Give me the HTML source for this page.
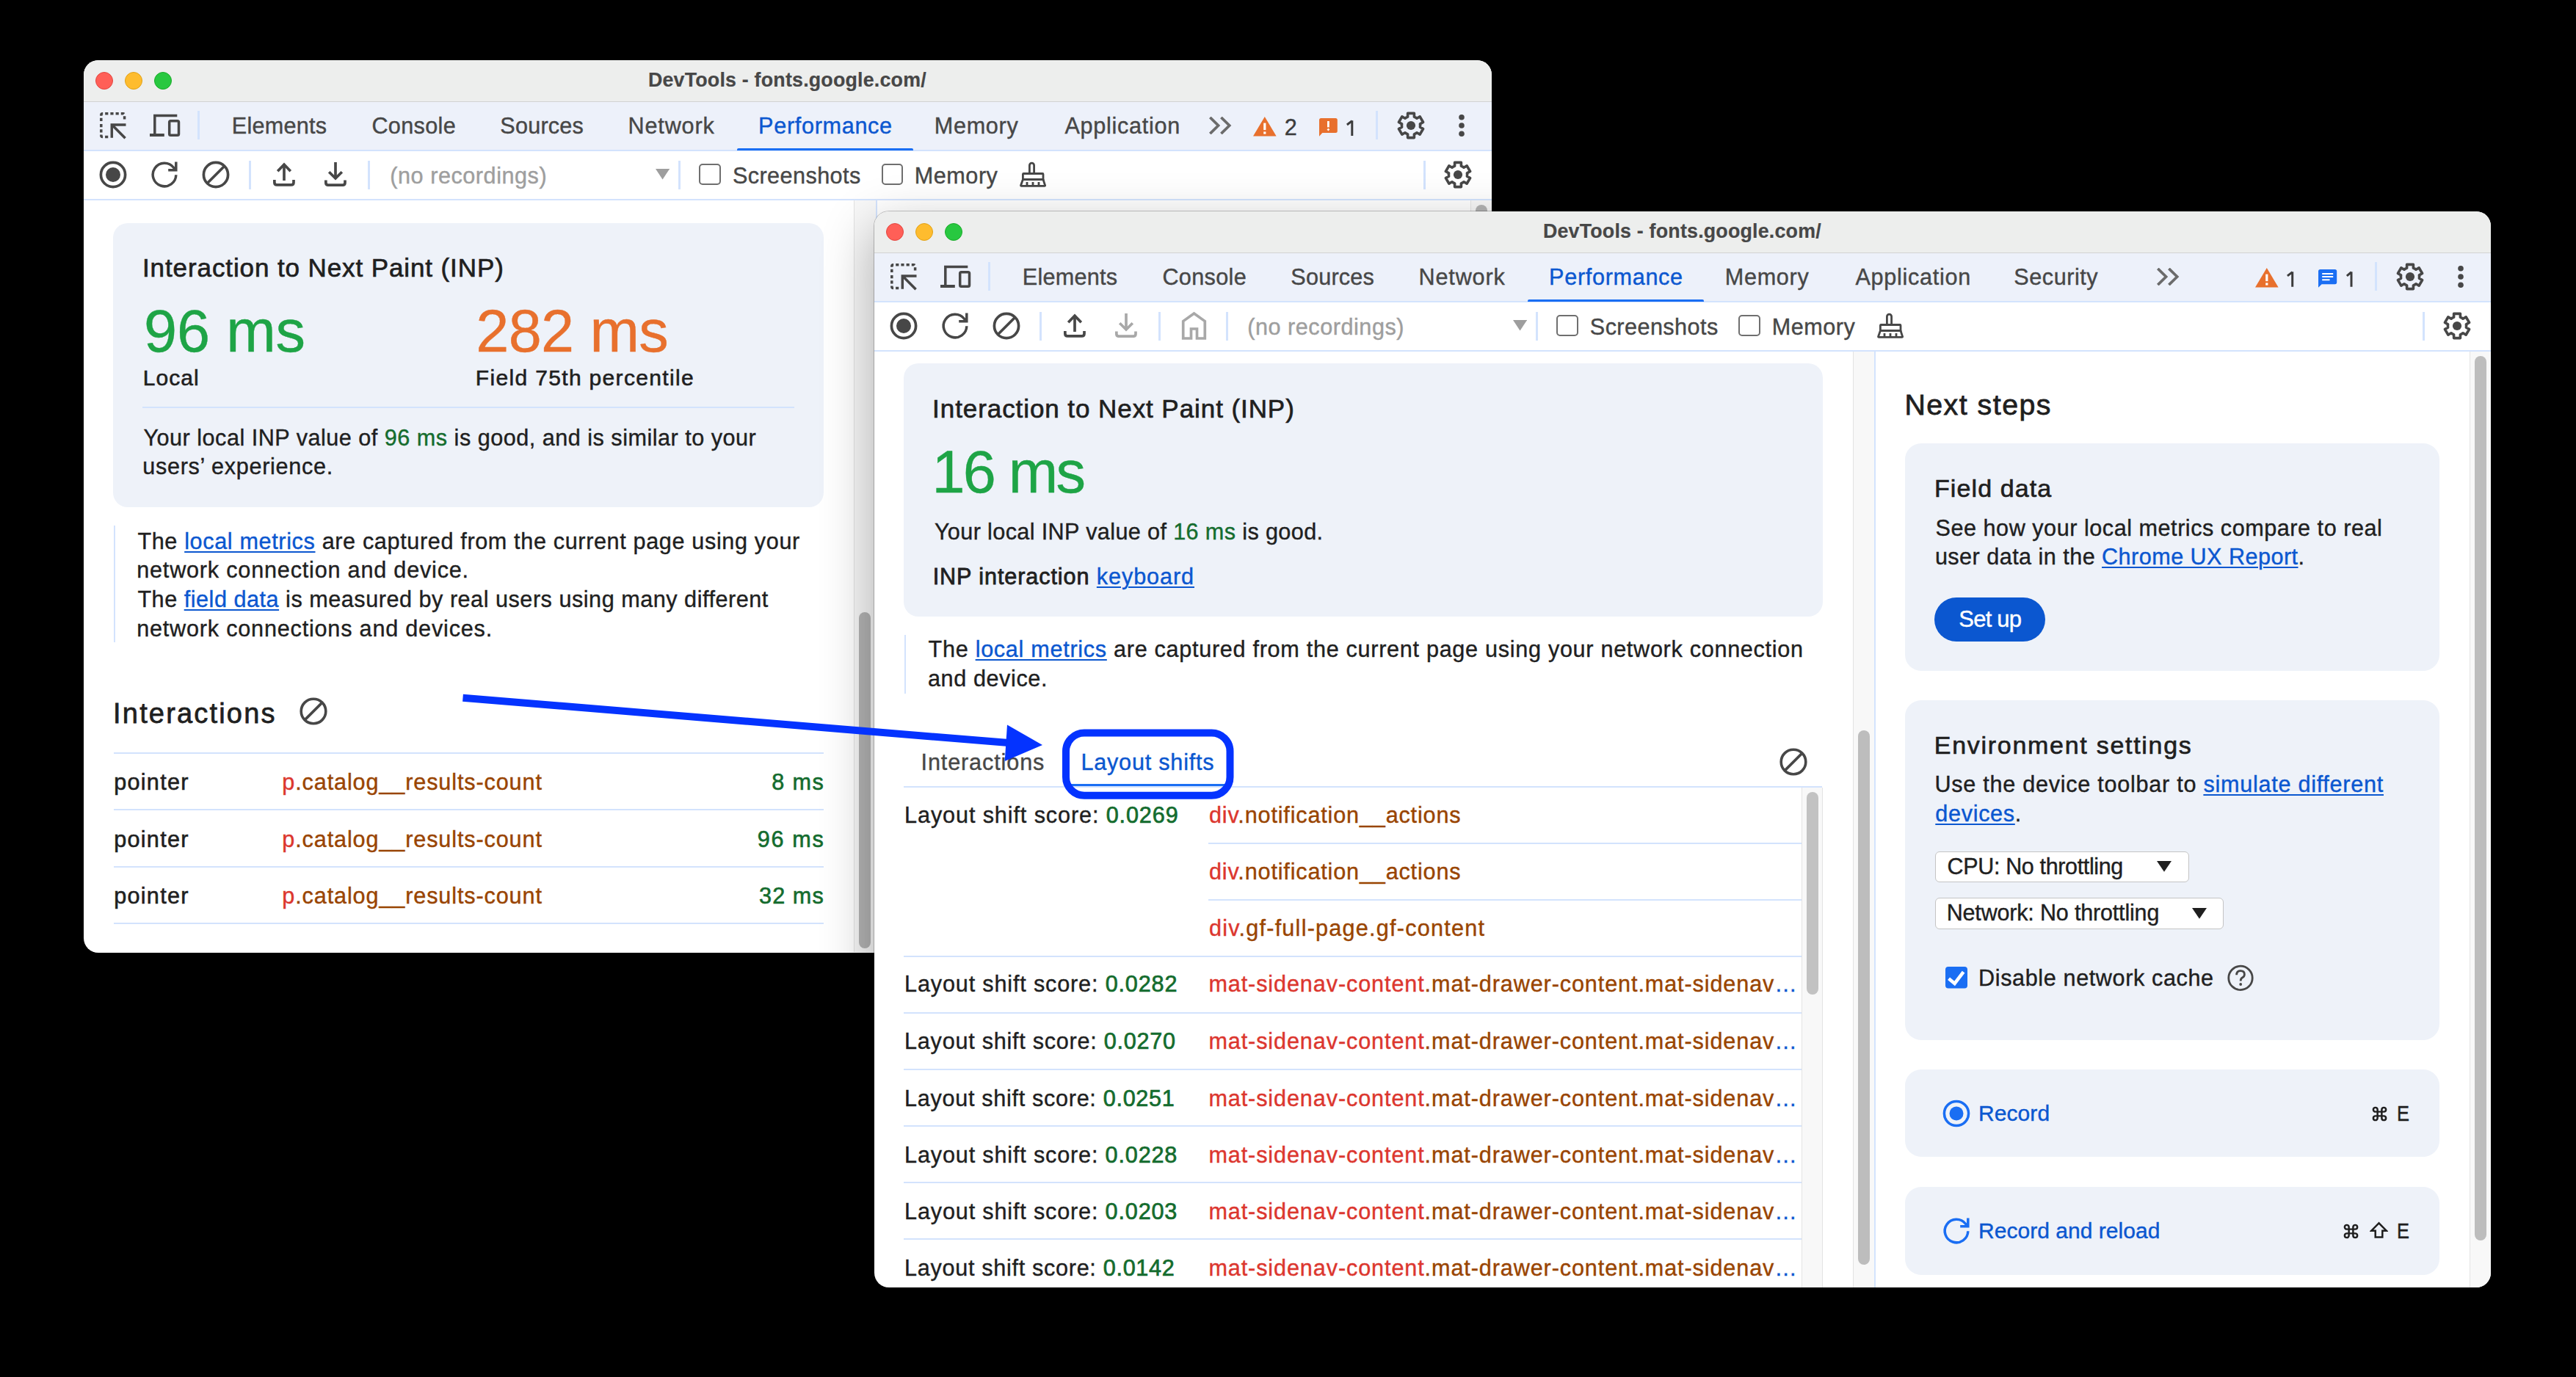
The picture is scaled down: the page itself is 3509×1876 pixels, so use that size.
<!DOCTYPE html><html><head><meta charset="utf-8"><style>html,body{margin:0;padding:0}body{width:3509px;height:1876px;background:#000;position:relative;overflow:hidden;font-family:"Liberation Sans",sans-serif}.a{position:absolute}.t{position:absolute;white-space:pre;-webkit-text-stroke:0.4px currentColor}.win{position:absolute;overflow:hidden;background:#fff}</style></head><body><div class="win" style="left:114px;top:82px;width:1918px;height:1216px;border-radius:20px"><div class="a" style="left:-114px;top:-82px"><div class="a" style="left:114px;top:82px;width:1918px;height:56px;background:#edeeed;"></div><div class="a" style="left:114px;top:138px;width:1918px;height:1px;background:#d2d2d2;"></div><div class="a" style="left:130px;top:98px;width:24px;height:24px;border-radius:50%;background:#ff5f57;box-sizing:border-box;border:1px solid #e2463f"></div><div class="a" style="left:170px;top:98px;width:24px;height:24px;border-radius:50%;background:#febc2e;box-sizing:border-box;border:1px solid #e1a116"></div><div class="a" style="left:210px;top:98px;width:24px;height:24px;border-radius:50%;background:#28c840;box-sizing:border-box;border:1px solid #1aab29"></div><div class="t" style="left:882.9px;top:96px;font-size:26.8px;line-height:26.8px;color:#474747;letter-spacing:0.207px;font-weight:700;-webkit-text-stroke:0.2px currentColor;">DevTools - fonts.google.com/</div><div class="a" style="left:114px;top:139px;width:1918px;height:65px;background:#edf1fa;"></div><div class="a" style="left:114px;top:204px;width:1918px;height:2px;background:#d3e3fd;"></div><svg class="a" style="left:135.5px;top:152.5px;" width="37" height="37" viewBox="0 0 37 37"><path d="M1.8 12 V3.8 Q1.8 1.8 3.8 1.8 H31.6 Q33.6 1.8 33.6 3.8 V11" fill="none" stroke="#474747" stroke-width="3.5" stroke-dasharray="4.2 3"/><path d="M1.8 16 V31.5 Q1.8 33.5 3.8 33.5 H12" fill="none" stroke="#474747" stroke-width="3.5" stroke-dasharray="4.2 3"/><path d="M16.3 34.8 V17 H35.5 M17 17.6 L34.6 35.2" fill="none" stroke="#474747" stroke-width="3.5"/></svg><svg class="a" style="left:204px;top:153.5px;" width="42" height="34" viewBox="0 0 42 34"><path d="M6.8 30 V3.6 H37.3" fill="none" stroke="#474747" stroke-width="3.5"/><rect x="0" y="28" width="19.8" height="4" fill="#474747"/><rect x="26.7" y="10.7" width="12.8" height="19.6" rx="1.8" fill="none" stroke="#474747" stroke-width="3.5"/></svg><div class="a" style="left:268.5px;top:151px;width:3.0px;height:39px;background:#d3e3fd;"></div><div class="t" style="left:315.8px;top:156px;font-size:30.6px;line-height:30.6px;color:#474747;letter-spacing:0.230px;">Elements</div><div class="t" style="left:506.4px;top:156px;font-size:30.6px;line-height:30.6px;color:#474747;letter-spacing:0.344px;">Console</div><div class="t" style="left:681.3px;top:156px;font-size:30.6px;line-height:30.6px;color:#474747;letter-spacing:0.231px;">Sources</div><div class="t" style="left:855.6px;top:156px;font-size:30.6px;line-height:30.6px;color:#474747;letter-spacing:0.820px;">Network</div><div class="t" style="left:1033.1px;top:156px;font-size:30.6px;line-height:30.6px;color:#0b57d0;letter-spacing:0.688px;">Performance</div><div class="t" style="left:1272.8px;top:156px;font-size:30.6px;line-height:30.6px;color:#474747;letter-spacing:0.688px;">Memory</div><div class="t" style="left:1450.5px;top:156px;font-size:30.6px;line-height:30.6px;color:#474747;letter-spacing:0.712px;">Application</div><div class="a" style="left:1004px;top:201.5px;width:240px;height:3.5px;background:#1a6ef3;border-radius:2px 2px 0 0"></div><svg class="a" style="left:1646.5px;top:159px;" width="31" height="24" viewBox="0 0 31 24"><path d="M1.3 0.9 L12.6 12 L1.3 23.1 M16.4 0.9 L27.7 12 L16.4 23.1" stroke="#6b6b6b" stroke-width="3.7" fill="none"/></svg><svg class="a" style="left:1706.6px;top:158.6px;" width="32" height="27" viewBox="0 0 32 27"><path d="M15.8 0 L31.6 26.5 H0 Z" fill="#e8702d"/><rect x="14.2" y="8.6" width="3.2" height="9.5" fill="#fff"/><rect x="14.2" y="20.4" width="3.2" height="3.2" fill="#fff"/></svg><div class="t" style="left:1749.7px;top:158px;font-size:30.6px;line-height:30.6px;color:#3c3c3c;">2</div><svg class="a" style="left:1797px;top:161px;" width="25" height="25" viewBox="0 0 25 25"><path d="M0 2.5 Q0 0 2.5 0 H22.3 Q24.8 0 24.8 2.5 V17.4 Q24.8 19.9 22.3 19.9 H4.3 L0 24.8 Z" fill="#e8702d"/><rect x="11" y="4" width="2.8" height="8.4" fill="#fff"/><rect x="11.1" y="14.3" width="2.6" height="2.6" fill="#fff" transform="rotate(45 12.4 15.6)"/></svg><svg class="a" style="left:1834.3px;top:163.1px;" width="10.400000000000091" height="21.900000000000006" viewBox="0 0 10.400000000000091 21.900000000000006"><path d="M7.80 21.900000000000006 V1.2 M7.80 1.6 L0.9 7.01" stroke="#3c3c3c" stroke-width="3" fill="none" stroke-linejoin="round"/></svg><div class="a" style="left:1873.5px;top:151px;width:3.0px;height:39px;background:#d3e3fd;"></div><svg class="a" style="left:1900px;top:149px;" width="44" height="44" viewBox="0 0 44 44"><path d="M15.70 11.09 L17.60 10.20 L17.60 5.40 L26.40 5.40 L26.40 10.20 L28.30 11.09 L30.02 12.29 L34.18 9.89 L38.58 17.51 L34.42 19.91 L34.60 22.00 L34.42 24.09 L38.58 26.49 L34.18 34.11 L30.02 31.71 L28.30 32.91 L26.40 33.80 L26.40 38.60 L17.60 38.60 L17.60 33.80 L15.70 32.91 L13.98 31.71 L9.82 34.11 L5.42 26.49 L9.58 24.09 L9.40 22.00 L9.58 19.91 L5.42 17.51 L9.82 9.89 L13.98 12.29 Z" fill="none" stroke="#474747" stroke-width="3.6" stroke-linejoin="round"/><circle cx="22" cy="22" r="6.1" fill="#474747"/></svg><svg class="a" style="left:1985px;top:154px;" width="12" height="34" viewBox="0 0 12 34"><circle cx="6" cy="5.7" r="3.8" fill="#474747"/><circle cx="6" cy="17" r="3.8" fill="#474747"/><circle cx="6" cy="28.3" r="3.8" fill="#474747"/></svg><div class="a" style="left:114px;top:206px;width:1918px;height:65px;background:#ffffff;"></div><div class="a" style="left:114px;top:271px;width:1918px;height:2px;background:#d3e3fd;"></div><svg class="a" style="left:134px;top:218px;" width="40" height="40" viewBox="0 0 40 40"><circle cx="20" cy="20" r="16.6" fill="none" stroke="#474747" stroke-width="3.7"/><circle cx="20" cy="20" r="10" fill="#474747"/></svg><svg class="a" style="left:204px;top:218px;" width="40" height="40" viewBox="0 0 40 40"><path d="M35.80 20.28 A15.8 15.8 0 1 1 32.45 10.27 L35.6 14.2" fill="none" stroke="#474747" stroke-width="3.5"/><path d="M25.2 13.7 H35.8 V2.6" fill="none" stroke="#474747" stroke-width="3.5"/></svg><svg class="a" style="left:274px;top:218px;" width="40" height="40" viewBox="0 0 40 40"><circle cx="20" cy="20" r="16.6" fill="none" stroke="#474747" stroke-width="3.7"/><path d="M31.74 8.26 L8.26 31.74" stroke="#474747" stroke-width="3.7"/></svg><div class="a" style="left:338.7px;top:219px;width:3.0px;height:38.5px;background:#d3e3fd;"></div><svg class="a" style="left:371.8px;top:220.5px;" width="30" height="33" viewBox="0 0 30 33"><path d="M15 4 V25" stroke="#474747" stroke-width="3.7" fill="none"/><path d="M6.2 12.2 L15 3.2 L23.8 12.2" stroke="#474747" stroke-width="3.7" fill="none"/><path d="M1.85 24 V27.5 Q1.85 30.9 5.2 30.9 H24.6 Q28 30.9 28 27.5 V24" stroke="#474747" stroke-width="3.7" fill="none"/></svg><svg class="a" style="left:442px;top:220.5px;" width="30" height="33" viewBox="0 0 30 33"><path d="M15 0 V21" stroke="#474747" stroke-width="3.7" fill="none"/><path d="M6.2 13.2 L15 22 L23.8 13.2" stroke="#474747" stroke-width="3.7" fill="none"/><path d="M1.85 24.5 V27.9 Q1.85 31.2 5.2 31.2 H24.6 Q28 31.2 28 27.9 V24.5" stroke="#474747" stroke-width="3.7" fill="none"/></svg><div class="a" style="left:501.1px;top:219px;width:3.0px;height:38.5px;background:#d3e3fd;"></div><div class="t" style="left:531.3px;top:224px;font-size:30.6px;line-height:30.6px;color:#9e9e9e;letter-spacing:0.541px;">(no recordings)</div><svg class="a" style="left:892.7px;top:230.2px;" width="19.09999999999991" height="14.5" viewBox="0 0 19.09999999999991 14.5"><path d="M0 0 H19.09999999999991 L9.549999999999955 14.5 Z" fill="#9e9e9e"/></svg><div class="a" style="left:923.8px;top:219px;width:3.0px;height:38.5px;background:#d3e3fd;"></div><div class="a" style="left:952.3px;top:223.3px;width:29.40000000000009px;height:29.19999999999999px;box-sizing:border-box;border:2.6px solid #6f6f6f;border-radius:5px"></div><div class="t" style="left:997.9px;top:224px;font-size:30.6px;line-height:30.6px;color:#474747;letter-spacing:0.435px;">Screenshots</div><div class="a" style="left:1200.5px;top:223.3px;width:29.299999999999955px;height:29.19999999999999px;box-sizing:border-box;border:2.6px solid #6f6f6f;border-radius:5px"></div><div class="t" style="left:1245.8px;top:224px;font-size:30.6px;line-height:30.6px;color:#474747;letter-spacing:0.528px;">Memory</div><svg class="a" style="left:1389.3px;top:219.4px;" width="37" height="37" viewBox="0 0 37 37"><path d="M13.4 17 V6.2 A3.1 3.1 0 0 1 19.6 6.2 V17" stroke="#474747" stroke-width="2.8" fill="none"/><path d="M4.4 17.5 H31.2 Q32 17.5 32 18.5 V25.5 H4.4 V18.5 Q4.4 17.5 5.4 17.5 Z" stroke="#474747" stroke-width="2.8" fill="none"/><path d="M4.4 25.5 L1.6 33.5 Q1.4 34.4 2.4 34.4 H33.8 Q34.8 34.4 34.6 33.5 L32 25.5" stroke="#474747" stroke-width="2.8" fill="none"/><path d="M10 34 V29 M18 34 V29 M26 34 V29" stroke="#474747" stroke-width="2.8"/></svg><div class="a" style="left:1939.1px;top:219px;width:3.0px;height:38.5px;background:#d3e3fd;"></div><svg class="a" style="left:1964px;top:215.5px;" width="44" height="44" viewBox="0 0 44 44"><path d="M15.70 11.09 L17.60 10.20 L17.60 5.40 L26.40 5.40 L26.40 10.20 L28.30 11.09 L30.02 12.29 L34.18 9.89 L38.58 17.51 L34.42 19.91 L34.60 22.00 L34.42 24.09 L38.58 26.49 L34.18 34.11 L30.02 31.71 L28.30 32.91 L26.40 33.80 L26.40 38.60 L17.60 38.60 L17.60 33.80 L15.70 32.91 L13.98 31.71 L9.82 34.11 L5.42 26.49 L9.58 24.09 L9.40 22.00 L9.58 19.91 L5.42 17.51 L9.82 9.89 L13.98 12.29 Z" fill="none" stroke="#474747" stroke-width="3.6" stroke-linejoin="round"/><circle cx="22" cy="22" r="6.1" fill="#474747"/></svg><div class="a" style="left:154px;top:304px;width:968px;height:387px;background:#eef2f9;border-radius:20px"></div><div class="t" style="left:194.0px;top:347px;font-size:35px;line-height:35px;color:#1f1f1f;letter-spacing:0.896px;-webkit-text-stroke:0.70px currentColor;">Interaction to Next Paint (INP)</div><div class="t" style="left:196.1px;top:411px;font-size:81px;line-height:81px;color:#1ea446;letter-spacing:-0.176px;">96 ms</div><div class="t" style="left:648.2px;top:411px;font-size:81px;line-height:81px;color:#e8702d;letter-spacing:-0.589px;">282 ms</div><div class="t" style="left:194.8px;top:500px;font-size:30px;line-height:30px;color:#1f1f1f;letter-spacing:1.037px;-webkit-text-stroke:0.60px currentColor;">Local</div><div class="t" style="left:647.8px;top:500px;font-size:30px;line-height:30px;color:#1f1f1f;letter-spacing:1.336px;-webkit-text-stroke:0.60px currentColor;">Field 75th percentile</div><div class="a" style="left:194px;top:554px;width:888px;height:2px;background:#d3e3fd;"></div><div class="t" style="left:195.5px;top:581px;font-size:30.6px;line-height:30.6px;color:#1f1f1f;letter-spacing:0.498px;">Your local INP value of <span style="color:#146c2e">96 ms</span> is good, and is similar to your</div><div class="t" style="left:194.3px;top:620px;font-size:30.6px;line-height:30.6px;color:#1f1f1f;letter-spacing:0.688px;">users’ experience.</div><div class="a" style="left:154.5px;top:716px;width:2.0px;height:159px;background:#d3e3fd;"></div><div class="t" style="left:187.4px;top:722px;font-size:30.6px;line-height:30.6px;color:#1f1f1f;letter-spacing:0.640px;">The <span style="color:#0b57d0;text-decoration:underline;text-decoration-thickness:2.4px;text-underline-offset:2.5px">local metrics</span> are captured from the current page using your</div><div class="t" style="left:186.2px;top:761px;font-size:30.6px;line-height:30.6px;color:#1f1f1f;letter-spacing:0.805px;">network connection and device.</div><div class="t" style="left:187.4px;top:801px;font-size:30.6px;line-height:30.6px;color:#1f1f1f;letter-spacing:0.521px;">The <span style="color:#0b57d0;text-decoration:underline;text-decoration-thickness:2.4px;text-underline-offset:2.5px">field data</span> is measured by real users using many different</div><div class="t" style="left:186.2px;top:841px;font-size:30.6px;line-height:30.6px;color:#1f1f1f;letter-spacing:0.799px;">network connections and devices.</div><div class="t" style="left:154.1px;top:953px;font-size:38px;line-height:38px;color:#1f1f1f;letter-spacing:2.175px;-webkit-text-stroke:0.76px currentColor;">Interactions</div><svg class="a" style="left:406.5px;top:949px;" width="40" height="40" viewBox="0 0 40 40"><circle cx="20" cy="20" r="16.8" fill="none" stroke="#474747" stroke-width="3.6"/><path d="M31.88 8.12 L8.12 31.88" stroke="#474747" stroke-width="3.6"/></svg><div class="a" style="left:155px;top:1025.3px;width:966.7px;height:2.0px;background:#d3e3fd;"></div><div class="a" style="left:155px;top:1102.3px;width:966.7px;height:2.0px;background:#d3e3fd;"></div><div class="a" style="left:155px;top:1179.8px;width:966.7px;height:2.0px;background:#d3e3fd;"></div><div class="a" style="left:155px;top:1257.2px;width:966.7px;height:2.0px;background:#d3e3fd;"></div><div class="t" style="left:155.2px;top:1050px;font-size:30.6px;line-height:30.6px;color:#1f1f1f;letter-spacing:1.278px;-webkit-text-stroke:0.61px currentColor;">pointer</div><div class="t" style="left:384.3px;top:1050px;font-size:30.6px;line-height:30.6px;color:#1f1f1f;letter-spacing:0.881px;"><span style="color:#dc362e">p</span><span style="color:#994400">.catalog__results-count</span></div><div class="t" style="left:1051.2px;top:1050px;font-size:30.6px;line-height:30.6px;color:#146c2e;letter-spacing:1.411px;-webkit-text-stroke:0.61px currentColor;">8 ms</div><div class="t" style="left:155.2px;top:1128px;font-size:30.6px;line-height:30.6px;color:#1f1f1f;letter-spacing:1.278px;-webkit-text-stroke:0.61px currentColor;">pointer</div><div class="t" style="left:384.3px;top:1128px;font-size:30.6px;line-height:30.6px;color:#1f1f1f;letter-spacing:0.881px;"><span style="color:#dc362e">p</span><span style="color:#994400">.catalog__results-count</span></div><div class="t" style="left:1031.8px;top:1128px;font-size:30.6px;line-height:30.6px;color:#146c2e;letter-spacing:1.653px;-webkit-text-stroke:0.61px currentColor;">96 ms</div><div class="t" style="left:155.2px;top:1205px;font-size:30.6px;line-height:30.6px;color:#1f1f1f;letter-spacing:1.278px;-webkit-text-stroke:0.61px currentColor;">pointer</div><div class="t" style="left:384.3px;top:1205px;font-size:30.6px;line-height:30.6px;color:#1f1f1f;letter-spacing:0.881px;"><span style="color:#dc362e">p</span><span style="color:#994400">.catalog__results-count</span></div><div class="t" style="left:1034.1px;top:1205px;font-size:30.6px;line-height:30.6px;color:#146c2e;letter-spacing:1.077px;-webkit-text-stroke:0.61px currentColor;">32 ms</div><div class="a" style="left:1162.5px;top:273px;width:30.5px;height:1024px;background:#f8f8f8;"></div><div class="a" style="left:1162.5px;top:273px;width:1.0px;height:1024px;background:#e3e3e3;"></div><div class="a" style="left:1170px;top:834px;width:16px;height:458px;background:#b4b4b4;border-radius:8px"></div><div class="a" style="left:1192.5px;top:273px;width:2.0px;height:1024px;background:#d3e3fd;"></div><div class="a" style="left:2002.5px;top:273px;width:29.5px;height:27px;background:#f8f8f8;"></div><div class="a" style="left:2002.5px;top:273px;width:1.0px;height:27px;background:#e3e3e3;"></div><div class="a" style="left:2010px;top:279px;width:16px;height:41px;background:#b4b4b4;border-radius:8px"></div></div></div><div class="win" style="left:1191px;top:288px;width:2202px;height:1465.5px;border-radius:20px;box-shadow:0 0 0 1px rgba(0,0,0,0.22),-2px 22px 70px rgba(0,0,0,0.30)"><div class="a" style="left:-1191px;top:-288px"><div class="a" style="left:1191px;top:288px;width:2202px;height:56px;background:#edeeed;"></div><div class="a" style="left:1191px;top:344px;width:2202px;height:1px;background:#d2d2d2;"></div><div class="a" style="left:1207px;top:304px;width:24px;height:24px;border-radius:50%;background:#ff5f57;box-sizing:border-box;border:1px solid #e2463f"></div><div class="a" style="left:1247px;top:304px;width:24px;height:24px;border-radius:50%;background:#febc2e;box-sizing:border-box;border:1px solid #e1a116"></div><div class="a" style="left:1287px;top:304px;width:24px;height:24px;border-radius:50%;background:#28c840;box-sizing:border-box;border:1px solid #1aab29"></div><div class="t" style="left:2101.9px;top:302px;font-size:26.8px;line-height:26.8px;color:#474747;letter-spacing:0.207px;font-weight:700;-webkit-text-stroke:0.2px currentColor;">DevTools - fonts.google.com/</div><div class="a" style="left:1191px;top:345px;width:2202px;height:65px;background:#edf1fa;"></div><div class="a" style="left:1191px;top:410px;width:2202px;height:2px;background:#d3e3fd;"></div><svg class="a" style="left:1212.5px;top:358.5px;" width="37" height="37" viewBox="0 0 37 37"><path d="M1.8 12 V3.8 Q1.8 1.8 3.8 1.8 H31.6 Q33.6 1.8 33.6 3.8 V11" fill="none" stroke="#474747" stroke-width="3.5" stroke-dasharray="4.2 3"/><path d="M1.8 16 V31.5 Q1.8 33.5 3.8 33.5 H12" fill="none" stroke="#474747" stroke-width="3.5" stroke-dasharray="4.2 3"/><path d="M16.3 34.8 V17 H35.5 M17 17.6 L34.6 35.2" fill="none" stroke="#474747" stroke-width="3.5"/></svg><svg class="a" style="left:1281px;top:359.5px;" width="42" height="34" viewBox="0 0 42 34"><path d="M6.8 30 V3.6 H37.3" fill="none" stroke="#474747" stroke-width="3.5"/><rect x="0" y="28" width="19.8" height="4" fill="#474747"/><rect x="26.7" y="10.7" width="12.8" height="19.6" rx="1.8" fill="none" stroke="#474747" stroke-width="3.5"/></svg><div class="a" style="left:1345.5px;top:357px;width:3.0px;height:39px;background:#d3e3fd;"></div><div class="t" style="left:1392.8px;top:362px;font-size:30.6px;line-height:30.6px;color:#474747;letter-spacing:0.230px;">Elements</div><div class="t" style="left:1583.4px;top:362px;font-size:30.6px;line-height:30.6px;color:#474747;letter-spacing:0.344px;">Console</div><div class="t" style="left:1758.3px;top:362px;font-size:30.6px;line-height:30.6px;color:#474747;letter-spacing:0.231px;">Sources</div><div class="t" style="left:1932.6px;top:362px;font-size:30.6px;line-height:30.6px;color:#474747;letter-spacing:0.820px;">Network</div><div class="t" style="left:2110.1px;top:362px;font-size:30.6px;line-height:30.6px;color:#0b57d0;letter-spacing:0.688px;">Performance</div><div class="t" style="left:2349.8px;top:362px;font-size:30.6px;line-height:30.6px;color:#474747;letter-spacing:0.688px;">Memory</div><div class="t" style="left:2527.5px;top:362px;font-size:30.6px;line-height:30.6px;color:#474747;letter-spacing:0.712px;">Application</div><div class="t" style="left:2743.3px;top:362px;font-size:30.6px;line-height:30.6px;color:#474747;letter-spacing:0.541px;">Security</div><div class="a" style="left:2081px;top:407.5px;width:240px;height:3.5px;background:#1a6ef3;border-radius:2px 2px 0 0"></div><svg class="a" style="left:2938px;top:365px;" width="31" height="24" viewBox="0 0 31 24"><path d="M1.3 0.9 L12.6 12 L1.3 23.1 M16.4 0.9 L27.7 12 L16.4 23.1" stroke="#6b6b6b" stroke-width="3.7" fill="none"/></svg><svg class="a" style="left:3072.3px;top:364.8px;" width="32" height="27" viewBox="0 0 32 27"><path d="M15.8 0 L31.6 26.5 H0 Z" fill="#e8702d"/><rect x="14.2" y="8.6" width="3.2" height="9.5" fill="#fff"/><rect x="14.2" y="20.4" width="3.2" height="3.2" fill="#fff"/></svg><svg class="a" style="left:3114.5px;top:369.1px;" width="10.300000000000182" height="21.69999999999999" viewBox="0 0 10.300000000000182 21.69999999999999"><path d="M7.70 21.69999999999999 V1.2 M7.70 1.6 L0.9 6.94" stroke="#3c3c3c" stroke-width="3" fill="none" stroke-linejoin="round"/></svg><svg class="a" style="left:3157.8px;top:367px;" width="26" height="25" viewBox="0 0 26 25"><path d="M0 2.6 Q0 0 2.6 0 H22.6 Q25.2 0 25.2 2.6 V17.6 Q25.2 20.2 22.6 20.2 H4.6 L0 24.8 Z" fill="#1a6ef3"/><path d="M5.2 5.9 H20.2 M5.2 10 H20.2 M5.2 14.3 H15.5" stroke="#fff" stroke-width="2"/></svg><svg class="a" style="left:3195.6px;top:369.1px;" width="9.599999999999909" height="21.69999999999999" viewBox="0 0 9.599999999999909 21.69999999999999"><path d="M7.00 21.69999999999999 V1.2 M7.00 1.6 L0.9 6.94" stroke="#3c3c3c" stroke-width="3" fill="none" stroke-linejoin="round"/></svg><div class="a" style="left:3234.5px;top:357px;width:3.0px;height:39px;background:#d3e3fd;"></div><svg class="a" style="left:3261px;top:355px;" width="44" height="44" viewBox="0 0 44 44"><path d="M15.70 11.09 L17.60 10.20 L17.60 5.40 L26.40 5.40 L26.40 10.20 L28.30 11.09 L30.02 12.29 L34.18 9.89 L38.58 17.51 L34.42 19.91 L34.60 22.00 L34.42 24.09 L38.58 26.49 L34.18 34.11 L30.02 31.71 L28.30 32.91 L26.40 33.80 L26.40 38.60 L17.60 38.60 L17.60 33.80 L15.70 32.91 L13.98 31.71 L9.82 34.11 L5.42 26.49 L9.58 24.09 L9.40 22.00 L9.58 19.91 L5.42 17.51 L9.82 9.89 L13.98 12.29 Z" fill="none" stroke="#474747" stroke-width="3.6" stroke-linejoin="round"/><circle cx="22" cy="22" r="6.1" fill="#474747"/></svg><svg class="a" style="left:3346px;top:360px;" width="12" height="34" viewBox="0 0 12 34"><circle cx="6" cy="5.7" r="3.8" fill="#474747"/><circle cx="6" cy="17" r="3.8" fill="#474747"/><circle cx="6" cy="28.3" r="3.8" fill="#474747"/></svg><div class="a" style="left:1191px;top:412px;width:2202px;height:65px;background:#ffffff;"></div><div class="a" style="left:1191px;top:477px;width:2202px;height:2px;background:#d3e3fd;"></div><svg class="a" style="left:1211px;top:424px;" width="40" height="40" viewBox="0 0 40 40"><circle cx="20" cy="20" r="16.6" fill="none" stroke="#474747" stroke-width="3.7"/><circle cx="20" cy="20" r="10" fill="#474747"/></svg><svg class="a" style="left:1281px;top:424px;" width="40" height="40" viewBox="0 0 40 40"><path d="M35.80 20.28 A15.8 15.8 0 1 1 32.45 10.27 L35.6 14.2" fill="none" stroke="#474747" stroke-width="3.5"/><path d="M25.2 13.7 H35.8 V2.6" fill="none" stroke="#474747" stroke-width="3.5"/></svg><svg class="a" style="left:1351px;top:424px;" width="40" height="40" viewBox="0 0 40 40"><circle cx="20" cy="20" r="16.6" fill="none" stroke="#474747" stroke-width="3.7"/><path d="M31.74 8.26 L8.26 31.74" stroke="#474747" stroke-width="3.7"/></svg><div class="a" style="left:1415.7px;top:425px;width:3.0px;height:38.5px;background:#d3e3fd;"></div><svg class="a" style="left:1448.8px;top:426.5px;" width="30" height="33" viewBox="0 0 30 33"><path d="M15 4 V25" stroke="#474747" stroke-width="3.7" fill="none"/><path d="M6.2 12.2 L15 3.2 L23.8 12.2" stroke="#474747" stroke-width="3.7" fill="none"/><path d="M1.85 24 V27.5 Q1.85 30.9 5.2 30.9 H24.6 Q28 30.9 28 27.5 V24" stroke="#474747" stroke-width="3.7" fill="none"/></svg><svg class="a" style="left:1519px;top:426.5px;" width="30" height="33" viewBox="0 0 30 33"><path d="M15 0 V21" stroke="#a8a8a8" stroke-width="3.7" fill="none"/><path d="M6.2 13.2 L15 22 L23.8 13.2" stroke="#a8a8a8" stroke-width="3.7" fill="none"/><path d="M1.85 24.5 V27.9 Q1.85 31.2 5.2 31.2 H24.6 Q28 31.2 28 27.9 V24.5" stroke="#a8a8a8" stroke-width="3.7" fill="none"/></svg><div class="a" style="left:1578.1px;top:425px;width:3.0px;height:38.5px;background:#d3e3fd;"></div><svg class="a" style="left:1608.6px;top:424px;" width="36" height="40" viewBox="0 0 36 40"><path d="M2.7 37 V13.6 L17.5 3 L32.3 13.6 V37 H21.5 V24 H13.5 V37 Z" stroke="#a8a8a8" stroke-width="3.7" fill="none" stroke-linejoin="miter"/></svg><div class="a" style="left:1670.3px;top:425px;width:3.0px;height:38.5px;background:#d3e3fd;"></div><div class="t" style="left:1699.2px;top:430px;font-size:30.6px;line-height:30.6px;color:#9e9e9e;letter-spacing:0.541px;">(no recordings)</div><svg class="a" style="left:2060.6px;top:436.2px;" width="19.09999999999991" height="14.5" viewBox="0 0 19.09999999999991 14.5"><path d="M0 0 H19.09999999999991 L9.549999999999955 14.5 Z" fill="#9e9e9e"/></svg><div class="a" style="left:2091.7px;top:425px;width:3.0px;height:38.5px;background:#d3e3fd;"></div><div class="a" style="left:2120.2px;top:429.3px;width:29.40000000000009px;height:29.19999999999999px;box-sizing:border-box;border:2.6px solid #6f6f6f;border-radius:5px"></div><div class="t" style="left:2165.8px;top:430px;font-size:30.6px;line-height:30.6px;color:#474747;letter-spacing:0.435px;">Screenshots</div><div class="a" style="left:2368.4px;top:429.3px;width:29.300000000000182px;height:29.19999999999999px;box-sizing:border-box;border:2.6px solid #6f6f6f;border-radius:5px"></div><div class="t" style="left:2413.7px;top:430px;font-size:30.6px;line-height:30.6px;color:#474747;letter-spacing:0.528px;">Memory</div><svg class="a" style="left:2557.2000000000003px;top:425.4px;" width="37" height="37" viewBox="0 0 37 37"><path d="M13.4 17 V6.2 A3.1 3.1 0 0 1 19.6 6.2 V17" stroke="#474747" stroke-width="2.8" fill="none"/><path d="M4.4 17.5 H31.2 Q32 17.5 32 18.5 V25.5 H4.4 V18.5 Q4.4 17.5 5.4 17.5 Z" stroke="#474747" stroke-width="2.8" fill="none"/><path d="M4.4 25.5 L1.6 33.5 Q1.4 34.4 2.4 34.4 H33.8 Q34.8 34.4 34.6 33.5 L32 25.5" stroke="#474747" stroke-width="2.8" fill="none"/><path d="M10 34 V29 M18 34 V29 M26 34 V29" stroke="#474747" stroke-width="2.8"/></svg><div class="a" style="left:3300.1px;top:425px;width:3.0px;height:38.5px;background:#d3e3fd;"></div><svg class="a" style="left:3325px;top:421.5px;" width="44" height="44" viewBox="0 0 44 44"><path d="M15.70 11.09 L17.60 10.20 L17.60 5.40 L26.40 5.40 L26.40 10.20 L28.30 11.09 L30.02 12.29 L34.18 9.89 L38.58 17.51 L34.42 19.91 L34.60 22.00 L34.42 24.09 L38.58 26.49 L34.18 34.11 L30.02 31.71 L28.30 32.91 L26.40 33.80 L26.40 38.60 L17.60 38.60 L17.60 33.80 L15.70 32.91 L13.98 31.71 L9.82 34.11 L5.42 26.49 L9.58 24.09 L9.40 22.00 L9.58 19.91 L5.42 17.51 L9.82 9.89 L13.98 12.29 Z" fill="none" stroke="#474747" stroke-width="3.6" stroke-linejoin="round"/><circle cx="22" cy="22" r="6.1" fill="#474747"/></svg><div class="a" style="left:1231px;top:495px;width:1252px;height:344.5px;background:#eef2f9;border-radius:20px"></div><div class="t" style="left:1270.1px;top:539px;font-size:35px;line-height:35px;color:#1f1f1f;letter-spacing:0.926px;-webkit-text-stroke:0.70px currentColor;">Interaction to Next Paint (INP)</div><div class="t" style="left:1269.4px;top:603px;font-size:81px;line-height:81px;color:#1ea446;letter-spacing:-2.769px;">16 ms</div><div class="t" style="left:1272.9px;top:709px;font-size:30.6px;line-height:30.6px;color:#1f1f1f;letter-spacing:0.374px;">Your local INP value of <span style="color:#146c2e">16 ms</span> is good.</div><div class="t" style="left:1270.7px;top:770px;font-size:30.6px;line-height:30.6px;color:#1f1f1f;letter-spacing:0.909px;"><span style="-webkit-text-stroke:0.8px currentColor">INP interaction </span><span style="color:#0b57d0;text-decoration:underline;text-decoration-thickness:2.4px;text-underline-offset:2.5px">keyboard</span></div><div class="a" style="left:1231.5px;top:865px;width:2.0px;height:80px;background:#d3e3fd;"></div><div class="t" style="left:1264.6px;top:869px;font-size:30.6px;line-height:30.6px;color:#1f1f1f;letter-spacing:0.706px;">The <span style="color:#0b57d0;text-decoration:underline;text-decoration-thickness:2.4px;text-underline-offset:2.5px">local metrics</span> are captured from the current page using your network connection</div><div class="t" style="left:1264.0px;top:909px;font-size:30.6px;line-height:30.6px;color:#1f1f1f;letter-spacing:0.590px;">and device.</div><div class="t" style="left:1254.5px;top:1023px;font-size:30.6px;line-height:30.6px;color:#474747;letter-spacing:0.881px;">Interactions</div><div class="t" style="left:1472.4px;top:1023px;font-size:30.6px;line-height:30.6px;color:#0b57d0;letter-spacing:0.789px;">Layout shifts</div><div class="a" style="left:1231px;top:1071px;width:1251px;height:2px;background:#d3e3fd;"></div><div class="a" style="left:1457px;top:1067.5px;width:214px;height:3.5px;background:#1a6ef3;border-radius:2px 2px 0 0"></div><svg class="a" style="left:2423px;top:1018px;" width="40" height="40" viewBox="0 0 40 40"><circle cx="20" cy="20" r="16.8" fill="none" stroke="#474747" stroke-width="3.6"/><path d="M31.88 8.12 L8.12 31.88" stroke="#474747" stroke-width="3.6"/></svg><div class="a" style="left:1646px;top:1148px;width:808px;height:2px;background:#d3e3fd;"></div><div class="a" style="left:1646px;top:1225px;width:808px;height:2px;background:#d3e3fd;"></div><div class="t" style="left:1232.1px;top:1095px;font-size:30.6px;line-height:30.6px;color:#1f1f1f;letter-spacing:0.890px;">Layout shift score: <span style="-webkit-text-stroke:0.7px currentColor;color:#146c2e">0.0269</span></div><div class="t" style="left:1647.0px;top:1095px;font-size:30.6px;line-height:30.6px;color:#1f1f1f;letter-spacing:0.834px;"><span style="color:#dc362e">div</span><span style="color:#994400">.notification__actions</span></div><div class="t" style="left:1647.0px;top:1172px;font-size:30.6px;line-height:30.6px;color:#1f1f1f;letter-spacing:0.834px;"><span style="color:#dc362e">div</span><span style="color:#994400">.notification__actions</span></div><div class="t" style="left:1647.0px;top:1249px;font-size:30.6px;line-height:30.6px;color:#1f1f1f;letter-spacing:1.228px;"><span style="color:#dc362e">div</span><span style="color:#994400">.gf-full-page.gf-content</span></div><div class="t" style="left:1232.1px;top:1325px;font-size:30.6px;line-height:30.6px;color:#1f1f1f;letter-spacing:0.838px;">Layout shift score: <span style="-webkit-text-stroke:0.7px currentColor;color:#146c2e">0.0282</span></div><div class="t" style="left:1646.4px;top:1325px;font-size:30.6px;line-height:30.6px;color:#1f1f1f;letter-spacing:0.896px;"><span style="color:#dc362e">mat-sidenav-content</span><span style="color:#994400">.mat-drawer-content.mat-sidenav</span><span style="color:#0b57d0">…</span></div><div class="t" style="left:1232.1px;top:1403px;font-size:30.6px;line-height:30.6px;color:#1f1f1f;letter-spacing:0.741px;">Layout shift score: <span style="-webkit-text-stroke:0.7px currentColor;color:#146c2e">0.0270</span></div><div class="t" style="left:1646.4px;top:1403px;font-size:30.6px;line-height:30.6px;color:#1f1f1f;letter-spacing:0.896px;"><span style="color:#dc362e">mat-sidenav-content</span><span style="color:#994400">.mat-drawer-content.mat-sidenav</span><span style="color:#0b57d0">…</span></div><div class="t" style="left:1232.1px;top:1481px;font-size:30.6px;line-height:30.6px;color:#1f1f1f;letter-spacing:0.694px;">Layout shift score: <span style="-webkit-text-stroke:0.7px currentColor;color:#146c2e">0.0251</span></div><div class="t" style="left:1646.4px;top:1481px;font-size:30.6px;line-height:30.6px;color:#1f1f1f;letter-spacing:0.896px;"><span style="color:#dc362e">mat-sidenav-content</span><span style="color:#994400">.mat-drawer-content.mat-sidenav</span><span style="color:#0b57d0">…</span></div><div class="t" style="left:1232.1px;top:1558px;font-size:30.6px;line-height:30.6px;color:#1f1f1f;letter-spacing:0.837px;">Layout shift score: <span style="-webkit-text-stroke:0.7px currentColor;color:#146c2e">0.0228</span></div><div class="t" style="left:1646.4px;top:1558px;font-size:30.6px;line-height:30.6px;color:#1f1f1f;letter-spacing:0.896px;"><span style="color:#dc362e">mat-sidenav-content</span><span style="color:#994400">.mat-drawer-content.mat-sidenav</span><span style="color:#0b57d0">…</span></div><div class="t" style="left:1232.1px;top:1635px;font-size:30.6px;line-height:30.6px;color:#1f1f1f;letter-spacing:0.837px;">Layout shift score: <span style="-webkit-text-stroke:0.7px currentColor;color:#146c2e">0.0203</span></div><div class="t" style="left:1646.4px;top:1635px;font-size:30.6px;line-height:30.6px;color:#1f1f1f;letter-spacing:0.896px;"><span style="color:#dc362e">mat-sidenav-content</span><span style="color:#994400">.mat-drawer-content.mat-sidenav</span><span style="color:#0b57d0">…</span></div><div class="t" style="left:1232.1px;top:1712px;font-size:30.6px;line-height:30.6px;color:#1f1f1f;letter-spacing:0.694px;">Layout shift score: <span style="-webkit-text-stroke:0.7px currentColor;color:#146c2e">0.0142</span></div><div class="t" style="left:1646.4px;top:1712px;font-size:30.6px;line-height:30.6px;color:#1f1f1f;letter-spacing:0.896px;"><span style="color:#dc362e">mat-sidenav-content</span><span style="color:#994400">.mat-drawer-content.mat-sidenav</span><span style="color:#0b57d0">…</span></div><div class="a" style="left:1231px;top:1301.5px;width:1223px;height:2.0px;background:#d3e3fd;"></div><div class="a" style="left:1231px;top:1378.8px;width:1223px;height:2.0px;background:#d3e3fd;"></div><div class="a" style="left:1231px;top:1456px;width:1223px;height:2px;background:#d3e3fd;"></div><div class="a" style="left:1231px;top:1532.8px;width:1223px;height:2.0px;background:#d3e3fd;"></div><div class="a" style="left:1231px;top:1609.6px;width:1223px;height:2.0px;background:#d3e3fd;"></div><div class="a" style="left:1231px;top:1687px;width:1223px;height:2px;background:#d3e3fd;"></div><div class="a" style="left:2454px;top:1073px;width:28px;height:687px;background:#f8f8f8;"></div><div class="a" style="left:2453.5px;top:1073px;width:1.0px;height:687px;background:#e3e3e3;"></div><div class="a" style="left:2481.5px;top:1073px;width:1.0px;height:687px;background:#e3e3e3;"></div><div class="a" style="left:2461.4px;top:1078.7px;width:15.400000000000091px;height:276.29999999999995px;background:#c2c2c2;border-radius:8px"></div><div class="a" style="left:2524px;top:479px;width:30px;height:1281px;background:#f8f8f8;"></div><div class="a" style="left:2523.5px;top:479px;width:1.0px;height:1281px;background:#e3e3e3;"></div><div class="a" style="left:2531px;top:995px;width:15.599999999999909px;height:728px;background:#bdbdbd;border-radius:8px"></div><div class="a" style="left:2553px;top:479px;width:2px;height:1281px;background:#d3e3fd;"></div><div class="t" style="left:2594.4px;top:532px;font-size:39.3px;line-height:39.3px;color:#1f1f1f;letter-spacing:1.496px;-webkit-text-stroke:0.79px currentColor;">Next steps</div><div class="a" style="left:2595px;top:604.3px;width:728px;height:309.4000000000001px;background:#eef2f9;border-radius:22px"></div><div class="t" style="left:2635.0px;top:648px;font-size:34px;line-height:34px;color:#1f1f1f;letter-spacing:1.086px;-webkit-text-stroke:0.68px currentColor;">Field data</div><div class="t" style="left:2636.5px;top:704px;font-size:30.6px;line-height:30.6px;color:#1f1f1f;letter-spacing:0.529px;">See how your local metrics compare to real</div><div class="t" style="left:2635.9px;top:743px;font-size:30.6px;line-height:30.6px;color:#1f1f1f;letter-spacing:0.457px;">user data in the <span style="color:#0b57d0;text-decoration:underline;text-decoration-thickness:2.4px;text-underline-offset:2.5px">Chrome UX Report</span>.</div><div class="a" style="left:2635px;top:814px;width:151px;height:59.60000000000002px;background:#0b57d0;border-radius:30px"></div><div class="t" style="left:2668.3px;top:828px;font-size:31px;line-height:31px;color:#ffffff;letter-spacing:-0.793px;">Set up</div><div class="a" style="left:2595px;top:954.3px;width:728px;height:462.4000000000001px;background:#eef2f9;border-radius:22px"></div><div class="t" style="left:2634.8px;top:998px;font-size:34px;line-height:34px;color:#1f1f1f;letter-spacing:1.713px;-webkit-text-stroke:0.68px currentColor;">Environment settings</div><div class="t" style="left:2635.4px;top:1053px;font-size:30.6px;line-height:30.6px;color:#1f1f1f;letter-spacing:0.733px;">Use the device toolbar to <span style="color:#0b57d0;text-decoration:underline;text-decoration-thickness:2.4px;text-underline-offset:2.5px">simulate different</span></div><div class="t" style="left:2636.3px;top:1093px;font-size:30.6px;line-height:30.6px;color:#1f1f1f;letter-spacing:0.680px;"><span style="color:#0b57d0;text-decoration:underline;text-decoration-thickness:2.4px;text-underline-offset:2.5px">devices</span>.</div><div class="a" style="left:2635.5px;top:1160px;width:346.5px;height:41.6px;box-sizing:border-box;border:1.5px solid #c4c4c4;border-radius:6px;background:#fff"></div><div class="t" style="left:2652.6px;top:1165px;font-size:30.5px;line-height:30.5px;color:#1f1f1f;letter-spacing:-0.356px;">CPU: No throttling</div><svg class="a" style="left:2938.4px;top:1173px;" width="20.0" height="14.799999999999955" viewBox="0 0 20.0 14.799999999999955"><path d="M0 0 H20.0 L10.0 14.799999999999955 Z" fill="#1f1f1f"/></svg><div class="a" style="left:2635.5px;top:1223.4px;width:393.7px;height:42.6px;box-sizing:border-box;border:1.5px solid #c4c4c4;border-radius:6px;background:#fff"></div><div class="t" style="left:2651.7px;top:1228px;font-size:30.5px;line-height:30.5px;color:#1f1f1f;letter-spacing:-0.171px;">Network: No throttling</div><svg class="a" style="left:2985.6px;top:1237px;" width="20.0" height="14.799999999999955" viewBox="0 0 20.0 14.799999999999955"><path d="M0 0 H20.0 L10.0 14.799999999999955 Z" fill="#1f1f1f"/></svg><svg class="a" style="left:2650.3px;top:1317.1px;" width="30" height="30" viewBox="0 0 30 30"><rect x="0" y="0" width="30" height="29.4" rx="4" fill="#1a6ef3"/><path d="M4.6 16.3 L12.6 23 L24.6 7.2" stroke="#fff" stroke-width="4.6" fill="none"/></svg><div class="t" style="left:2695.1px;top:1317px;font-size:30.6px;line-height:30.6px;color:#1f1f1f;letter-spacing:0.610px;">Disable network cache</div><svg class="a" style="left:3032px;top:1312px;" width="40" height="40" viewBox="0 0 40 40"><circle cx="20" cy="20.4" r="16.2" fill="none" stroke="#474747" stroke-width="2.8"/><path d="M14.6 16.2 Q14.6 10.6 20 10.6 Q25.4 10.6 25.4 15.4 Q25.4 18.4 22.3 20 Q20.2 21.2 20.2 24.5" stroke="#474747" stroke-width="2.8" fill="none"/><circle cx="20.2" cy="29" r="1.9" fill="#474747"/></svg><div class="a" style="left:2595px;top:1457.4px;width:728px;height:118.89999999999986px;background:#eef2f9;border-radius:22px"></div><svg class="a" style="left:2645.2px;top:1496.9px;" width="40" height="40" viewBox="0 0 40 40"><circle cx="20" cy="20" r="16.6" fill="none" stroke="#1a6ef3" stroke-width="3.5"/><circle cx="20" cy="20" r="9.5" fill="#1a6ef3"/></svg><div class="t" style="left:2695.1px;top:1502px;font-size:30px;line-height:30px;color:#0b57d0;letter-spacing:0.055px;">Record</div><svg class="a" style="left:3229.5px;top:1505.5px;" width="23" height="23" viewBox="0 0 23 23"><g transform="scale(0.9583)"><path d="M18 3a3 3 0 0 0-3 3v12a3 3 0 0 0 3 3 3 3 0 0 0 3-3 3 3 0 0 0-3-3H6a3 3 0 0 0-3 3 3 3 0 0 0 3 3 3 3 0 0 0 3-3V6a3 3 0 0 0-3-3 3 3 0 0 0-3 3 3 3 0 0 0 3 3h12a3 3 0 0 0 3-3 3 3 0 0 0-3-3z" fill="none" stroke="#1f1f1f" stroke-width="2.6"/></g></svg><div class="t" style="left:3264.6px;top:1502px;font-size:30px;line-height:30px;color:#1f1f1f;transform:scaleX(0.85);transform-origin:left">E</div><div class="a" style="left:2595px;top:1617px;width:728px;height:119.59999999999991px;background:#eef2f9;border-radius:22px"></div><svg class="a" style="left:2645px;top:1657px;" width="40" height="40" viewBox="0 0 40 40"><path d="M35.80 20.28 A15.8 15.8 0 1 1 32.45 10.27 L35.6 14.2" fill="none" stroke="#1a6ef3" stroke-width="3.5"/><path d="M25.2 13.7 H35.8 V2.6" fill="none" stroke="#1a6ef3" stroke-width="3.5"/></svg><div class="t" style="left:2695.1px;top:1662px;font-size:30px;line-height:30px;color:#0b57d0;letter-spacing:0.029px;">Record and reload</div><svg class="a" style="left:3191px;top:1665.5px;" width="23" height="23" viewBox="0 0 23 23"><g transform="scale(0.9583)"><path d="M18 3a3 3 0 0 0-3 3v12a3 3 0 0 0 3 3 3 3 0 0 0 3-3 3 3 0 0 0-3-3H6a3 3 0 0 0-3 3 3 3 0 0 0 3 3 3 3 0 0 0 3-3V6a3 3 0 0 0-3-3 3 3 0 0 0-3 3 3 3 0 0 0 3 3h12a3 3 0 0 0 3-3 3 3 0 0 0-3-3z" fill="none" stroke="#1f1f1f" stroke-width="2.6"/></g></svg><svg class="a" style="left:3227.8px;top:1664px;" width="25" height="25" viewBox="0 0 25 25"><g transform="scale(1.0417)"><path d="M12 2.2 L2.2 12.2 H7.4 V20.6 H16.6 V12.2 H21.8 Z" fill="none" stroke="#1f1f1f" stroke-width="2.4" stroke-linejoin="miter"/></g></svg><div class="t" style="left:3264.6px;top:1662px;font-size:30px;line-height:30px;color:#1f1f1f;transform:scaleX(0.85);transform-origin:left">E</div><div class="a" style="left:3364px;top:479px;width:29px;height:1281px;background:#f8f8f8;"></div><div class="a" style="left:3363.5px;top:479px;width:1.0px;height:1281px;background:#e3e3e3;"></div><div class="a" style="left:3371px;top:485px;width:16px;height:1205px;background:#bdbdbd;border-radius:8px"></div></div></div><svg class="a" style="left:0;top:0" width="3509" height="1876" viewBox="0 0 3509 1876"><path d="M630.5 950.7 L1380 1012.6" stroke="#0433ff" stroke-width="10"/><path d="M1420 1015 L1372 987.6 L1368.7 1036.9 Z" fill="#0433ff"/><rect x="1452" y="998.5" width="223.5" height="85.2" rx="25" fill="none" stroke="#0433ff" stroke-width="10"/></svg></body></html>
